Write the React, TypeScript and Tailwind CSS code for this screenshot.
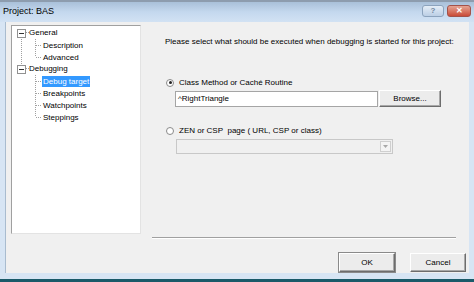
import React from "react";

const font = { fontFamily: '"Liberation Sans", Arial, sans-serif' };

function Box() {
  return (
    <div className="w-[9px] h-[9px] border border-[#919191] bg-white flex items-center justify-center">
      <div className="w-[5px] h-px bg-[#333]" />
    </div>
  );
}

type Item = { label: string; kind: "parent" | "child"; sel?: boolean; last?: boolean; parentLast?: boolean };

const items: Item[] = [
  { label: "General", kind: "parent" },
  { label: "Description", kind: "child" },
  { label: "Advanced", kind: "child", last: true },
  { label: "Debugging", kind: "parent", parentLast: true },
  { label: "Debug target", kind: "child", sel: true },
  { label: "Breakpoints", kind: "child" },
  { label: "Watchpoints", kind: "child" },
  { label: "Steppings", kind: "child", last: true },
];

function Row({ it, idx }: { it: Item; idx: number }) {
  if (it.kind === "parent") {
    return (
      <div className="h-[12px] flex items-center relative">
        <svg className="absolute left-0 top-0" width="20" height="12">
          {idx > 0 && <line x1="8.5" y1="0" x2="8.5" y2="2" stroke="#a0a0a0" strokeDasharray="1 1" />}
          {!it.parentLast && <line x1="8.5" y1="10" x2="8.5" y2="12" stroke="#a0a0a0" strokeDasharray="1 1" />}
          <line x1="13" y1="5.5" x2="16" y2="5.5" stroke="#a0a0a0" strokeDasharray="1 1" />
        </svg>
        <div className="ml-[4px] relative"><Box /></div>
        <span className="ml-[3px] text-[8px] leading-[12px] text-black">{it.label}</span>
      </div>
    );
  }
  const parentContinues = idx < 3;
  return (
    <div className="h-[12px] flex items-center relative">
      <svg className="absolute left-0 top-0" width="32" height="12">
        {parentContinues && <line x1="8.5" y1="0" x2="8.5" y2="12" stroke="#a0a0a0" strokeDasharray="1 1" />}
        <line x1="22.5" y1="0" x2="22.5" y2={it.last ? 6 : 12} stroke="#a0a0a0" strokeDasharray="1 1" />
        <line x1="23" y1="6.5" x2="29" y2="6.5" stroke="#a0a0a0" strokeDasharray="1 1" />
      </svg>
      <span
        className={
          "ml-[29px] px-[1px] text-[8px] leading-[11px] h-[11px] " +
          (it.sel ? "bg-[#3399ff] text-white" : "text-black")
        }
      >
        {it.label}
      </span>
    </div>
  );
}

function Radio({ checked }: { checked?: boolean }) {
  return (
    <div className="w-[8px] h-[8px] rounded-full border border-[#8a8a8a] bg-white flex items-center justify-center">
      {checked && <div className="w-[3px] h-[3px] rounded-full bg-[#222]" />}
    </div>
  );
}

export default function App() {
  return (
    <div className="w-[474px] h-[282px] flex flex-col bg-[#d7e5f4] overflow-hidden" style={font}>
      {/* title bar */}
      <div className="h-[22px] flex items-center justify-between bg-gradient-to-b from-[#a9c0d9] via-[#c4d8ee] to-[#d2e2f3] border-t-2 border-[#8d9cae] pl-[3px] pr-[3px]">
        <span className="text-[9px] text-black">Project: BAS</span>
        <div className="flex items-center gap-[3px] -mt-[2px]">
          <div className="w-[22px] h-[12px] rounded-[3px] border border-[#8ca3bd] bg-gradient-to-b from-[#e4edf7] to-[#bccfe5] flex items-center justify-center text-[8px] font-bold text-[#7388a0] leading-none">?</div>
          <div className="w-[24px] h-[12px] rounded-[3px] border border-[#a3524a] bg-gradient-to-b from-[#e4a393] to-[#c94a37] flex items-center justify-center text-[8px] font-bold text-white leading-none">✕</div>
        </div>
      </div>
      {/* body */}
      <div className="flex-1 flex pl-[5px] pr-[5px]">
        <div className="flex-1 bg-[#f0f0f0] flex flex-col border-l border-[#a9bccf]">
          <div className="flex pt-[3px] h-[217px]">
            {/* tree */}
            <div className="ml-[5px] w-[130px] h-[209px] bg-white border border-t-[#a0a0a0] border-l-[#a0a0a0] border-r-[#e3e3e3] border-b-[#e3e3e3] pt-[1px] pl-[1px]">
              {items.map((it, i) => (
                <Row key={i} it={it} idx={i} />
              ))}
            </div>
            {/* right pane */}
            <div className="ml-[11px] w-[304px] flex flex-col text-[8px] text-black">
              <div className="pl-[13px] mt-[10px] leading-[13px] whitespace-nowrap">
                Please select what should be executed when debugging is started for this project:
              </div>
              <div className="pl-[14px] mt-[28px] flex items-center gap-[5px] h-[13px]">
                <Radio checked />
                <span>Class Method or Caché Routine</span>
              </div>
              <div className="pl-[23px] mt-[1px] flex items-center">
                <div className="w-[203px] h-[16px] bg-white border border-[#a5a5a5] flex items-center pl-[2px]">^RightTriangle</div>
                <div className="ml-[1px] w-[62px] h-[17px] border border-t-[#fff] border-l-[#fff] border-r-[#6d6d6d] border-b-[#6d6d6d] bg-[#ececec] flex items-center justify-center shadow-[inset_-1px_-1px_0_#a8a8a8]">Browse...</div>
              </div>
              <div className="pl-[14px] mt-[17px] flex items-center gap-[5px] h-[13px]">
                <Radio />
                <span>ZEN or CSP&nbsp; page ( URL, CSP or class)</span>
              </div>
              <div className="pl-[24px] mt-[2px] flex items-center">
                <div className="w-[217px] h-[15px] bg-[#f0f0f0] border border-[#c8c8c8] flex items-center justify-end pr-[1px]">
                  <div className="w-[11px] h-[11px] border border-[#cfcfcf] bg-[#f4f4f4] flex items-center justify-center">
                    <svg width="5" height="3"><polygon points="0,0 5,0 2.5,3" fill="#a8a8a8" /></svg>
                  </div>
                </div>
              </div>
              <div className="flex-1" />
              <div className="h-[2px] border-t border-[#a0a0a0] border-b-white border-b w-[304px]" />
            </div>
          </div>
          {/* buttons */}
          <div className="flex justify-end pr-[3px] gap-[15px] mt-[14px]">
            <div className="w-[56px] h-[19px] border border-t-[#fff] border-l-[#fff] border-r-[#6d6d6d] border-b-[#6d6d6d] bg-[#ececec] shadow-[inset_-1px_-1px_0_#a8a8a8,0_0_0_1px_#8a8a8a] flex items-center justify-center text-[8px]">OK</div>
            <div className="w-[56px] h-[19px] border border-t-[#fff] border-l-[#fff] border-r-[#6d6d6d] border-b-[#6d6d6d] bg-[#ececec] shadow-[inset_-1px_-1px_0_#a8a8a8] flex items-center justify-center text-[8px]">Cancel</div>
          </div>
        </div>
      </div>
      <div className="h-[6px]" />
      <div className="h-[3px] bg-[#1a5a69]" />
    </div>
  );
}
